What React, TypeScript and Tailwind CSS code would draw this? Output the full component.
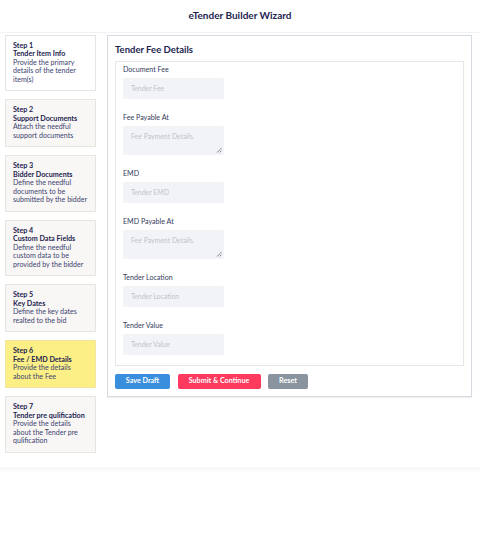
import React from "react";

const steps = [
  { n: 1, title: "Tender Item Info", desc: ["Provide the primary", "details of the tender", "item(s)"], state: "first" },
  { n: 2, title: "Support Documents", desc: ["Attach the needful", "support documents"], state: "" },
  { n: 3, title: "Bidder Documents", desc: ["Define the needful", "documents to be", "submitted by the bidder"], state: "" },
  { n: 4, title: "Custom Data Fields", desc: ["Define the needful", "custom data to be", "provided by the bidder"], state: "" },
  { n: 5, title: "Key Dates", desc: ["Define the key dates", "realted to the bid"], state: "" },
  { n: 6, title: "Fee / EMD Details", desc: ["Provide the details", "about the Fee"], state: "active" },
  { n: 7, title: "Tender pre qulification", desc: ["Provide the details", "about the Tender pre", "qulification"], state: "" },
];

const fields = [
  { label: "Document Fee", ph: "Tender Fee", area: false },
  { label: "Fee Payable At", ph: "Fee Payment Details", area: true },
  { label: "EMD", ph: "Tender EMD", area: false },
  { label: "EMD Payable At", ph: "Fee Payment Details", area: true },
  { label: "Tender Location", ph: "Tender Location", area: false },
  { label: "Tender Value", ph: "Tender Value", area: false },
];

function StepCard({ s }: { s: (typeof steps)[number] }) {
  const cls =
    s.state === "active"
      ? "bg-[#fcef86] border-[#efe6a0]"
      : s.state === "first"
      ? "bg-white border-[#e4e4e4]"
      : "bg-[#f9f7f5] border-[#e8e4e0]";
  return (
    <div className={`border ${cls} pl-[7px] pr-[2px] py-[6px] text-[7.1px] leading-[8.5px] whitespace-nowrap`}>
      <div className="font-bold text-[#1c2450] text-[7.2px]">Step {s.n}</div>
      <div className="font-bold text-[#1c2450] text-[7.2px]">{s.title}</div>
      {s.desc.map((l) => (
        <div key={l} className="text-[#3b4370]">{l}</div>
      ))}
    </div>
  );
}

export default function App() {
  return (
    <div className="w-[480px] h-[543px] bg-white overflow-hidden font-['Lato','Noto_Sans',sans-serif]">
      <div className="h-[33px] flex items-center justify-center border-b border-[#f0f2f4]">
        <h1 className="text-[10px] font-bold text-[#1c2450] -mt-[2px]">eTender Builder Wizard</h1>
      </div>
      <div className="flex pl-[5px] pr-[8px] pt-[1.5px] gap-[11px] items-start">
        <div className="w-[91px] flex flex-col gap-[8px] shrink-0">
          {steps.map((s) => (
            <StepCard key={s.n} s={s} />
          ))}
        </div>
        <div className="flex-1 border border-[#d5dae0] px-[7px] pt-[7px] pb-[7px] shadow-[0_1px_1px_rgba(0,0,0,0.06)]">
          <h2 className="text-[9.5px] font-bold text-[#1c2450] leading-[13px] mb-[5px]">Tender Fee Details</h2>
          <div className="border border-[#e3e7eb] pl-[7px] pt-[3px] pb-[10px] flex flex-col gap-[14px]">
            {fields.map((f) => (
              <div key={f.label} className="flex flex-col">
                <label className="text-[7.1px] leading-[9px] text-[#333a5c] mb-[4px]">{f.label}</label>
                {f.area ? (
                  <div className="relative w-[101px] h-[29px] bg-[#f1f3f6] rounded-[2px] pl-[8px] pt-[6px] text-[6.9px] leading-[9px] text-[#bfc4cc]">
                    {f.ph}
                    <svg className="absolute right-[2px] bottom-[2px]" width="6" height="6" viewBox="0 0 6 6">
                      <path d="M5.5 1 L1 5.5 M5.5 3.5 L3.5 5.5" stroke="#6b7280" strokeWidth="0.8" />
                    </svg>
                  </div>
                ) : (
                  <div className="w-[101px] h-[21px] bg-[#f1f3f6] rounded-[2px] flex items-center pl-[8px] text-[6.9px] text-[#bfc4cc]">
                    {f.ph}
                  </div>
                )}
              </div>
            ))}
          </div>
          <div className="flex gap-[7.5px] mt-[8px]">
            <button className="w-[55px] h-[15px] rounded-[2px] bg-[#3a8ede] text-white text-[7.2px] font-bold">Save Draft</button>
            <button className="w-[83px] h-[15px] rounded-[2px] bg-[#fe3a5e] text-white text-[7.2px] font-bold">Submit &amp; Continue</button>
            <button className="w-[40px] h-[15px] rounded-[2px] bg-[#8a949e] text-white text-[7.2px] font-bold">Reset</button>
          </div>
        </div>
      </div>
      <div className="mt-[14px] h-[6px] bg-gradient-to-b from-[#f3f5f7] to-white" />
    </div>
  );
}
